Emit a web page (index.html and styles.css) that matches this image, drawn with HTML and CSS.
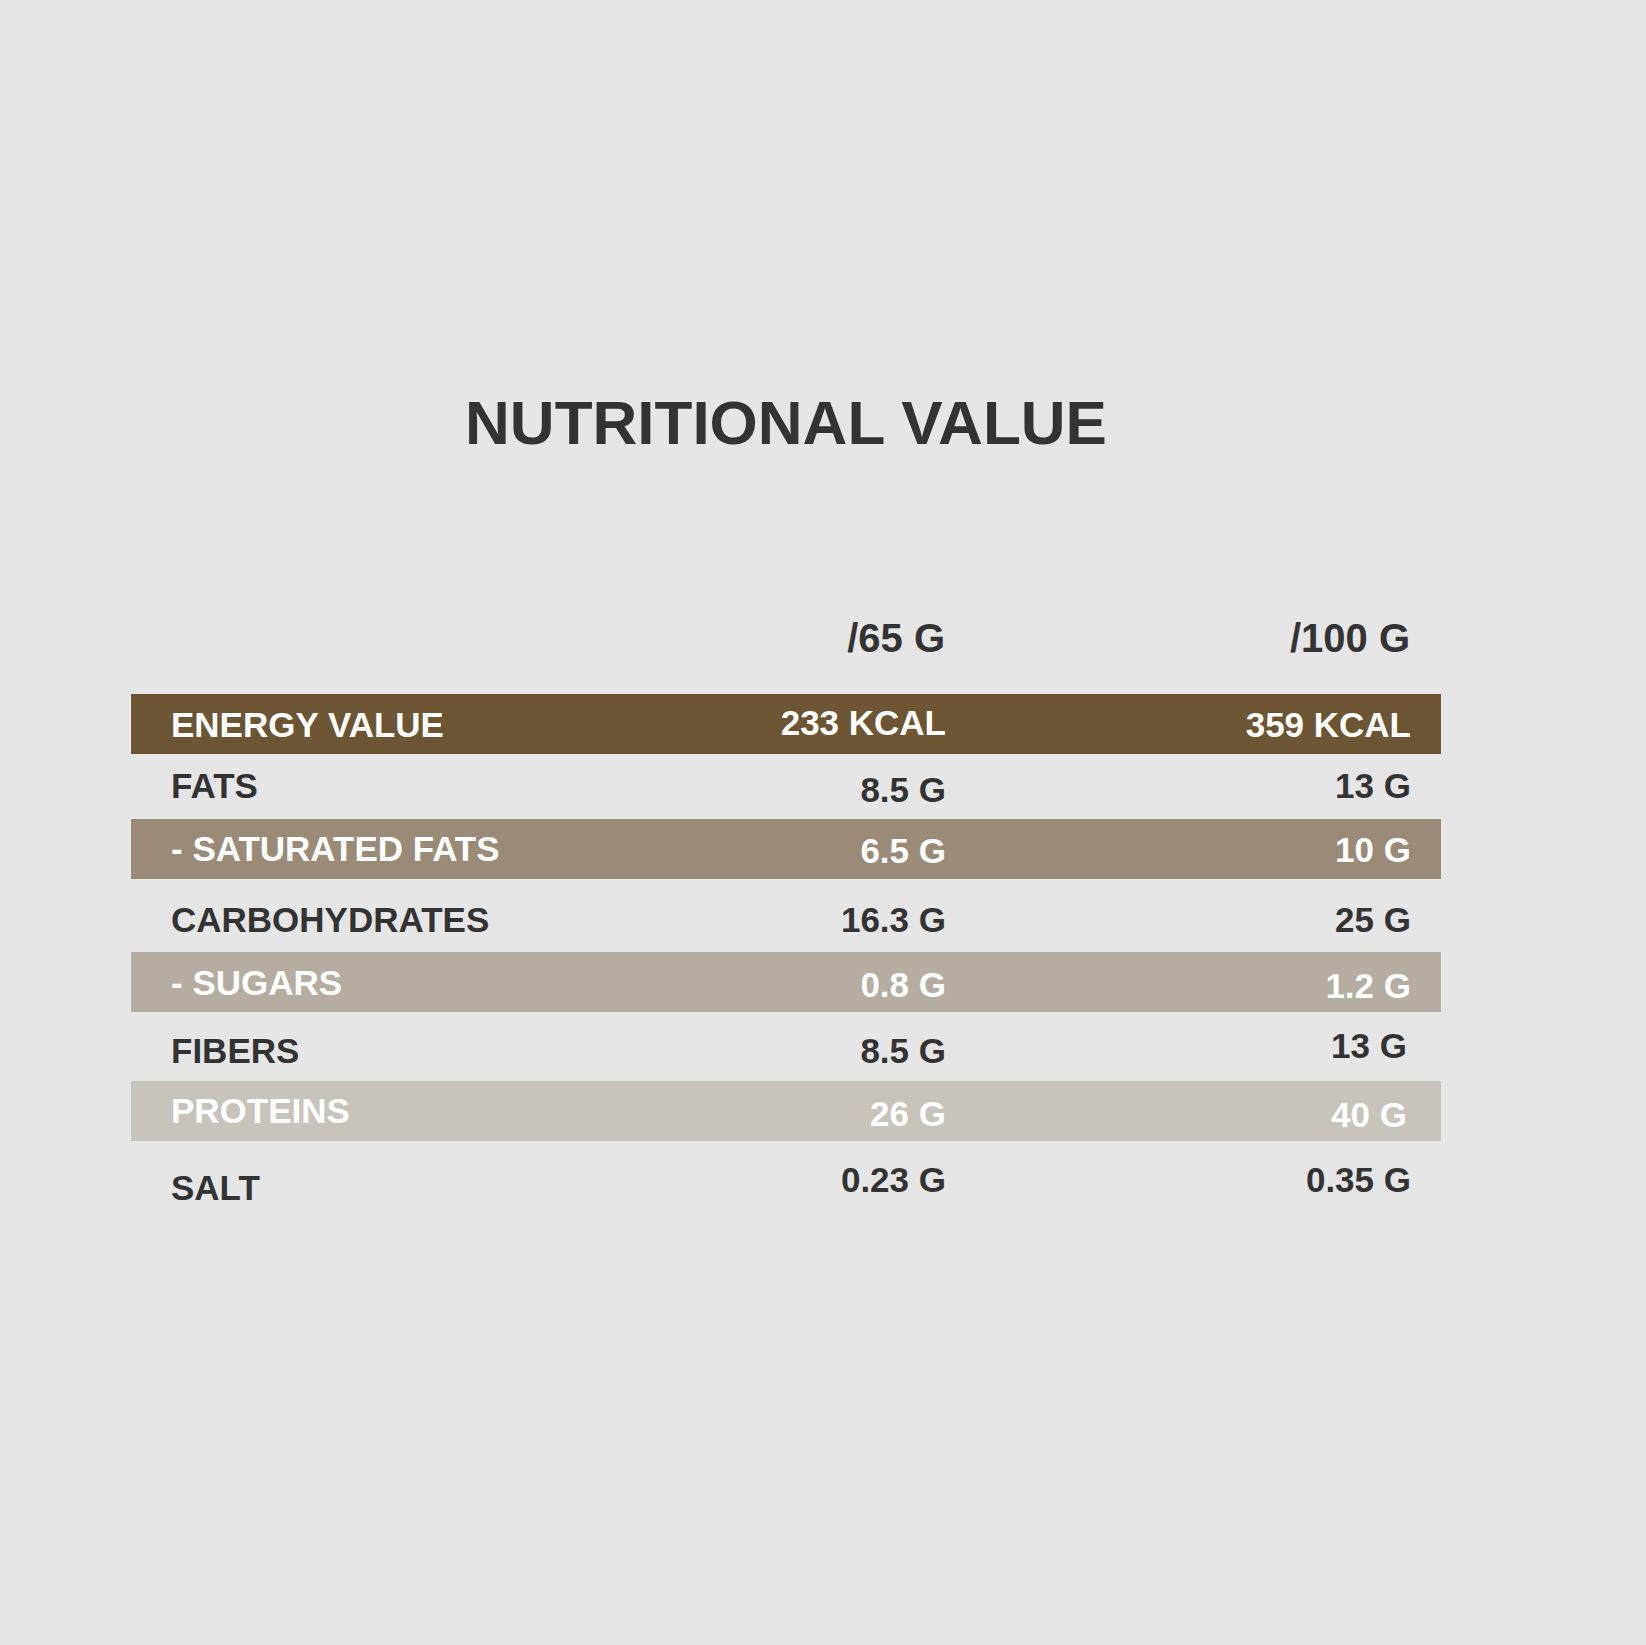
FILE: index.html
```html
<!DOCTYPE html>
<html lang="en">
<head>
<meta charset="utf-8">
<title>Nutritional Value</title>
<link rel="stylesheet" href="styles.css">
</head>
<body>
<main class="panel">
  <h1 class="title">NUTRITIONAL VALUE</h1>
  <div class="table">
    <div class="head">
      <span></span>
      <span class="num">/65 G</span>
      <span class="num">/100 G</span>
    </div>
    <div class="row energy">
      <span>ENERGY VALUE</span>
      <span class="num up2">233 KCAL</span>
      <span class="num">359 KCAL</span>
    </div>
    <div class="row fats">
      <span>FATS</span>
      <span class="num dn4">8.5 G</span>
      <span class="num">13 G</span>
    </div>
    <div class="row sat">
      <span>- SATURATED FATS</span>
      <span class="num dn2">6.5 G</span>
      <span class="num dn1">10 G</span>
    </div>
    <div class="row carbs">
      <span>CARBOHYDRATES</span>
      <span class="num">16.3 G</span>
      <span class="num">25 G</span>
    </div>
    <div class="row sugars">
      <span>- SUGARS</span>
      <span class="num dn2">0.8 G</span>
      <span class="num dn3">1.2 G</span>
    </div>
    <div class="row fibers">
      <span>FIBERS</span>
      <span class="num">8.5 G</span>
      <span class="num up5 shift4">13 G</span>
    </div>
    <div class="row proteins">
      <span>PROTEINS</span>
      <span class="num dn3">26 G</span>
      <span class="num dn4 shift4">40 G</span>
    </div>
    <div class="row salt">
      <span>SALT</span>
      <span class="num up8">0.23 G</span>
      <span class="num up8">0.35 G</span>
    </div>
  </div>
</main>
</body>
</html>
```

FILE: styles.css
```css
html, body {
  margin: 0;
  padding: 0;
  background: #e6e6e6;
}

body {
  min-height: 1645px;
  font-family: "Liberation Sans", Arial, sans-serif;
  font-weight: 700;
  color: #333333;
}

.panel {
  width: 1310px;
  margin-left: 131px;
  padding-top: 392px;
}

.title {
  margin: 0;
  font-size: 62px;
  line-height: 62px;
  font-weight: 700;
  text-align: center;
  color: #333333;
}

.table {
  margin-top: 164px;
}

.head,
.row {
  display: grid;
  grid-template-columns: 1fr 250px 465px;
  padding: 0 30px 0 40px;
  align-items: start;
}

.head {
  font-size: 40px;
  line-height: 40px;
  margin-bottom: 36px;
  padding-right: 31px;
}

.row {
  font-size: 35px;
  line-height: 35px;
}

.num {
  text-align: right;
  white-space: nowrap;
}

.energy   { height: 60px; padding-top: 13px; box-sizing: border-box; background: #6b5535; color: #ffffff; }
.fats     { height: 65px; padding-top: 14px; box-sizing: border-box; }
.sat      { height: 60px; padding-top: 12px; box-sizing: border-box; background: #998b77; color: #ffffff; }
.carbs    { height: 73px; padding-top: 23px; box-sizing: border-box; }
.sugars   { height: 60px; padding-top: 13px; box-sizing: border-box; background: #b5ada1; color: #ffffff; }
.fibers   { height: 69px; padding-top: 21px; box-sizing: border-box; }
.proteins { height: 60px; padding-top: 12px; box-sizing: border-box; background: #c8c3bb; color: #ffffff; }
.salt     { height: 90px; padding-top: 29px; box-sizing: border-box; }

.up2 { margin-top: -2px; }
.up5 { margin-top: -5px; }
.up8 { margin-top: -8px; }
.dn1 { margin-top: 1px; }
.dn2 { margin-top: 2px; }
.dn3 { margin-top: 3px; }
.dn4 { margin-top: 4px; }
.shift4 { margin-right: 4px; }
```
